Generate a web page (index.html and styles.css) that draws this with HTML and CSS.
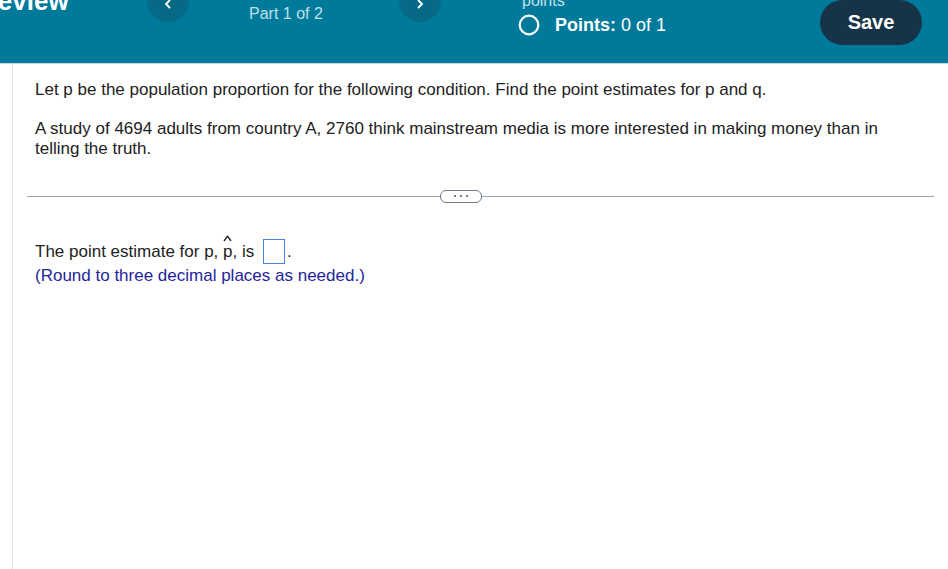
FILE: index.html
```html
<!DOCTYPE html>
<html>
<head>
<meta charset="utf-8">
<link rel="stylesheet" href="styles.css">
</head>
<body>
<header class="topbar">
  <div class="title">Review</div>
  <div class="nav-btn nav-prev">
    <svg width="10" height="10" viewBox="0 0 10 10"><path d="M6.5 1.5 L3 5 L6.5 8.5" fill="none" stroke="#fff" stroke-width="1.8" stroke-linecap="round" stroke-linejoin="round"/></svg>
  </div>
  <div class="part">Part 1 of 2</div>
  <div class="nav-btn nav-next">
    <svg width="10" height="10" viewBox="0 0 10 10"><path d="M3.5 1.5 L7 5 L3.5 8.5" fill="none" stroke="#fff" stroke-width="1.8" stroke-linecap="round" stroke-linejoin="round"/></svg>
  </div>
  <div class="points">
    <div class="points-label">points</div>
    <div class="points-row">
      <svg class="ring" width="22" height="22" viewBox="0 0 22 22"><circle cx="11" cy="11" r="9.3" fill="none" stroke="#fff" stroke-width="2.2"/></svg>
      <span><b>Points:</b> 0 of 1</span>
    </div>
  </div>
  <div class="save">Save</div>
</header>
<main class="content">
  <p class="q">Let p be the population proportion for the following condition. Find the point estimates for p and q.</p>
  <p class="q">A study of 4694 adults from country A, 2760 think mainstream media is more interested in making money than in telling the truth.</p>
  <div class="divider">
    <div class="rule rule-left"></div>
    <div class="pill"><i></i><i></i><i></i></div>
    <div class="rule rule-right"></div>
  </div>
  <p class="answer">The point estimate for p, <span class="phat"><svg class="hat" width="9" height="7" viewBox="0 0 9 7"><path d="M1 6 L4.5 1.2 L8 6" fill="none" stroke="#222" stroke-width="1.4" stroke-linejoin="round"/></svg>p</span>, is <span class="box"></span>.</p>
  <p class="hint">(Round to three decimal places as needed.)</p>
</main>
</body>
</html>
```

FILE: styles.css
```css
html, body {
  margin: 0;
  padding: 0;
  background: #fff;
  font-family: "Liberation Sans", Arial, sans-serif;
  overflow: hidden;
  height: 569px;
}

.topbar {
  height: 63px;
  background: #007a9b;
  border-bottom: 1px solid #c5dbe3;
  display: flex;
  align-items: flex-start;
  overflow: hidden;
  color: #fff;
}

.title {
  font-weight: bold;
  font-size: 26px;
  line-height: 26px;
  margin-top: -12px;
  margin-left: -21px;
  width: 168px;
  flex: none;
}

.nav-btn {
  width: 42px;
  height: 42px;
  border-radius: 50%;
  background: #066a86;
  flex: none;
  margin-top: -20px;
  display: flex;
  align-items: center;
  justify-content: center;
  padding-top: 5px;
  box-sizing: border-box;
}

.nav-next { margin-left: 78px; }

.part {
  margin-left: 60px;
  margin-top: 5px;
  font-size: 16px;
  line-height: 18px;
  color: #bfe0ea;
  flex: none;
  width: 72px;
  white-space: nowrap;
}

.points {
  margin-left: 77px;
  margin-top: -7px;
  flex: none;
}

.points-label {
  font-size: 16px;
  line-height: 15px;
  color: #bfe0ea;
  margin-left: 4px;
}

.points-row {
  display: flex;
  align-items: center;
  margin-top: 6px;
  font-size: 18px;
  color: #fff;
}

.points-row .ring {
  margin-right: 15px;
}

.save {
  margin-left: auto;
  margin-right: 26px;
  width: 102px;
  height: 45px;
  border-radius: 23px;
  background: #163347;
  color: #fff;
  font-weight: bold;
  font-size: 20px;
  display: flex;
  align-items: center;
  justify-content: center;
  flex: none;
}

.content {
  margin-left: 12px;
  border-left: 1px solid #dde3ec;
  padding: 16px 0 0 22px;
  height: 505px;
  box-sizing: border-box;
  color: #222;
  font-size: 17px;
}

.q {
  margin: 0 0 19px 0;
  line-height: 20px;
  padding-right: 50px;
}

.divider {
  display: flex;
  align-items: center;
  margin: 30px 14px 0 -8px;
  height: 14px;
}

.rule {
  height: 1px;
  background: #9aa4b0;
}

.rule-left { width: 413px; flex: none; }
.rule-right { flex: 1; }

.pill {
  width: 40px;
  height: 11px;
  border: 1px solid #6f7b87;
  border-radius: 6px;
  display: flex;
  align-items: center;
  justify-content: center;
  gap: 4px;
  flex: none;
}

.pill i {
  width: 2px;
  height: 2px;
  border-radius: 50%;
  background: #4a5663;
}

.answer {
  margin: 36px 0 0 0;
  line-height: 24px;
  display: flex;
  align-items: center;
  white-space: pre;
}

.phat {
  position: relative;
  display: inline-block;
}

.hat {
  position: absolute;
  left: 0px;
  top: -5px;
}

.box {
  display: inline-block;
  width: 20px;
  height: 23px;
  border: 1px solid #4c82e3;
  margin-left: 4px;
  margin-right: 2px;
  box-sizing: content-box;
}

.hint {
  margin: 2px 0 0 0;
  line-height: 20px;
  color: #25259a;
}
```
